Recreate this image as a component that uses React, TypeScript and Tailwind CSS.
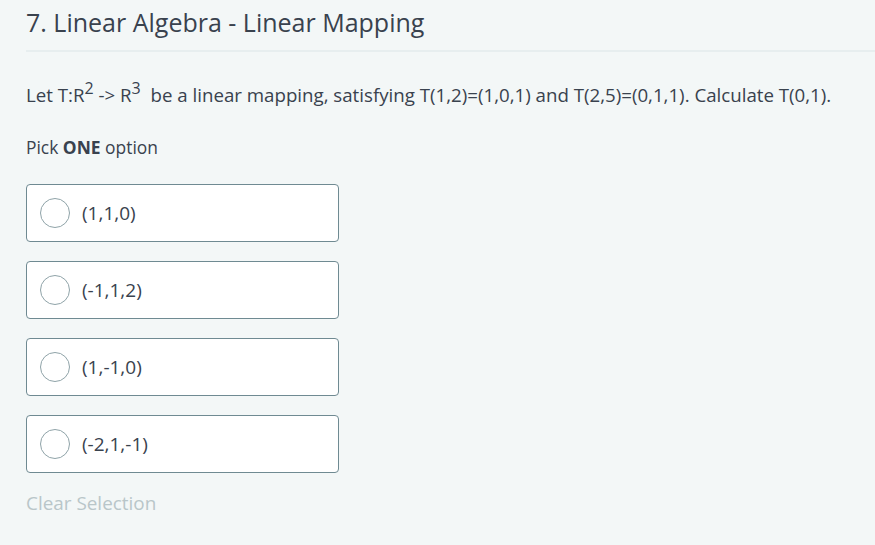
export default function App() {
  const options = ["(1,1,0)", "(-1,1,2)", "(1,-1,0)", "(-2,1,-1)"];
  return (
    <div className="min-h-[545px] w-[875px] bg-[#f3f7f7] text-[#39424e]" style={{ fontFamily: '"Open Sans", sans-serif' }}>
      <div className="pl-[26px]">
        <div className="h-[52px] border-b-2 border-[#e7eeef] pt-[5px]">
          <h1 className="text-[25px] leading-[34px]">7. Linear Algebra - Linear Mapping</h1>
        </div>
        <p className="mt-[29px] text-[18.7px] leading-[28px]">
          Let T:R<sup className="text-[16px]">2</sup> -&gt; R<sup className="text-[16px]">3</sup>&nbsp; be a linear mapping, satisfying T(1,2)=(1,0,1) and T(2,5)=(0,1,1). Calculate T(0,1).
        </p>
        <p className="mt-[24px] text-[17.4px] leading-[28px]">
          Pick <b>ONE</b> option
        </p>
        <div className="mt-[23px] flex flex-col gap-[19px]">
          {options.map((o) => (
            <div key={o} className="flex h-[58px] w-[313px] items-center rounded-[4px] border border-[#6f8a92] bg-white pl-[13px]">
              <div className="h-[30px] w-[30px] rounded-full border border-[#8fa3a8] bg-white" />
              <span className="ml-[12px] text-[19px]">{o}</span>
            </div>
          ))}
        </div>
        <div className="mt-[16px] text-[18.9px] leading-[28px] text-[#b9c6c9]">Clear Selection</div>
      </div>
    </div>
  );
}
